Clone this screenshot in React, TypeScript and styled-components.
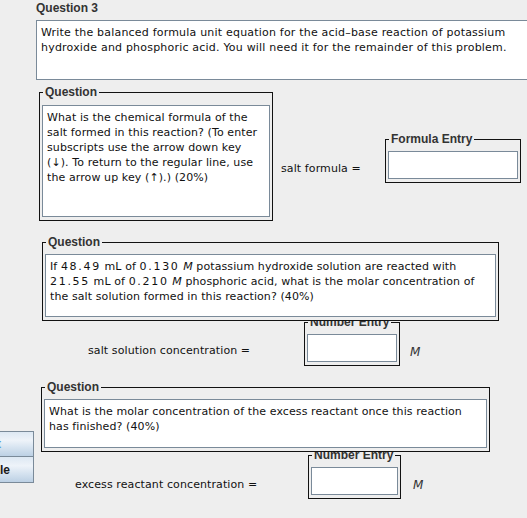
import React from "react";
import styled, { createGlobalStyle } from "styled-components";

const GlobalStyle = createGlobalStyle`
  html, body {
    margin: 0;
    padding: 0;
    background: #eeeeee;
  }
  body {
    font-family: "DejaVu Sans", sans-serif;
  }
`;

const Page = styled.div`
  position: relative;
  width: 527px;
  height: 518px;
  overflow: hidden;
  box-sizing: border-box;
  padding-top: 1px;
  background: #eeeeee;
  color: #111;
  font-family: "DejaVu Sans", sans-serif;
  font-size: 11px;
  letter-spacing: 0.1px;
`;

const Heading = styled.div`
  margin-left: 36px;
  height: 14px;
  line-height: 14px;
  font-family: "Liberation Sans", Arial, sans-serif;
  font-weight: bold;
  font-size: 12px;
  letter-spacing: 0;
  color: #333;
`;

const TextArea = styled.div<{ $h: number; $w?: number }>`
  box-sizing: border-box;
  width: ${(p) => (p.$w ? `${p.$w}px` : "100%")};
  height: ${(p) => p.$h}px;
  padding: 4px 4px;
  background: #fff;
  border: 1px solid #7a8a99;
  line-height: 15px;
  white-space: nowrap;
`;

const Intro = styled(TextArea)`
  margin-top: 5px;
  margin-left: 36px;
  letter-spacing: 0.2px;
`;

const Line = styled.div``;

const Em = styled.i`
  font-style: italic;
`;

const Num = styled.span`
  letter-spacing: 1.7px;
`;

const TitledBox = styled.fieldset<{ $w: number; $left: number; $top: number; $padTop?: number }>`
  position: relative;
  z-index: 1;
  box-sizing: border-box;
  width: ${(p) => p.$w}px;
  min-width: 0;
  margin: ${(p) => p.$top}px 0 0 ${(p) => p.$left}px;
  padding: ${(p) => p.$padTop ?? 5}px 2px 3px 2px;
  border: 1px solid #111;
  background: #eeeeee;
`;

const Title = styled.legend`
  margin-left: 1px;
  padding: 0 2px;
  line-height: 14px;
  height: 14px;
  font-family: "Liberation Sans", Arial, sans-serif;
  font-weight: bold;
  font-size: 12px;
  letter-spacing: 0;
  color: #333;
`;

const EntryBox = styled.fieldset<{ $w: number }>`
  box-sizing: border-box;
  width: ${(p) => p.$w}px;
  min-width: 0;
  margin: 0;
  padding: 5px 2px 3px 2px;
  border: 1px solid #111;
`;

const Field = styled.div`
  box-sizing: border-box;
  height: 28px;
  background: #fff;
  border: 1px solid #7a8a99;
`;

const Row = styled.div<{ $top: number }>`
  display: flex;
  align-items: flex-start;
  margin-top: ${(p) => p.$top}px;
`;

const Label = styled.div<{ $left: number; $w: number; $top: number }>`
  box-sizing: border-box;
  margin: ${(p) => p.$top}px 0 0 ${(p) => p.$left}px;
  width: ${(p) => p.$w}px;
  line-height: 15px;
  white-space: nowrap;
`;

const Slot = styled.div<{ $top?: number }>`
  margin-top: ${(p) => p.$top ?? 0}px;
`;

const Unit = styled.div<{ $left: number; $top: number }>`
  margin: ${(p) => p.$top}px 0 0 ${(p) => p.$left}px;
  line-height: 15px;
  font-style: italic;
  font-size: 12px;
  color: #333;
`;

const SideButtons = styled.div`
  position: absolute;
  left: 0;
  top: 431px;
  width: 34px;
  z-index: 2;
  display: flex;
  flex-direction: column;
`;

const SideButton = styled.div<{ $h: number; $pad: number; $color: string }>`
  box-sizing: border-box;
  height: ${(p) => p.$h}px;
  display: flex;
  align-items: center;
  justify-content: flex-end;
  overflow: hidden;
  white-space: nowrap;
  padding-right: ${(p) => p.$pad}px;
  border: 1px solid #7a8a99;
  border-left: none;
  & + & {
    border-top: none;
  }
  background: linear-gradient(#dde8f3 0%, #eef3f9 35%, #d6e3f0 65%, #bcd0e4 100%);
  font-family: "Liberation Sans", Arial, sans-serif;
  font-weight: bold;
  font-size: 12px;
  letter-spacing: 0;
  color: ${(p) => p.$color};
`;

export default function App() {
  return (
    <Page>
      <GlobalStyle />
      <Heading>Question 3</Heading>
      <Intro $h={60} $w={500}>
        <Line>Write the balanced formula unit equation for the acid–base reaction of potassium</Line>
        <Line>hydroxide and phosphoric acid. You will need it for the remainder of this problem.</Line>
      </Intro>

      <Row $top={5}>
        <TitledBox $w={234} $left={39} $top={0} $padTop={6}>
          <Title>Question</Title>
          <TextArea $h={112}>
            <Line>What is the chemical formula of the</Line>
            <Line>salt formed in this reaction? (To enter</Line>
            <Line>subscripts use the arrow down key</Line>
            <Line>(↓). To return to the regular line, use</Line>
            <Line>the arrow up key (↑).) (20%)</Line>
          </TextArea>
        </TitledBox>
        <Label $left={8} $w={104} $top={76}>salt formula =</Label>
        <Slot $top={47}>
          <EntryBox $w={136}>
            <Title>Formula Entry</Title>
            <Field />
          </EntryBox>
        </Slot>
      </Row>

      <TitledBox $w={457} $left={42} $top={14}>
        <Title>Question</Title>
        <TextArea $h={63}>
          <Line>If <Num>48.49</Num> mL of <Num>0.130</Num> <Em>M</Em> potassium hydroxide solution are reacted with</Line>
          <Line><Num>21.55</Num> mL of <Num>0.210</Num> <Em>M</Em> phosphoric acid, what is the molar concentration of</Line>
          <Line>the salt solution formed in this reaction? (40%)</Line>
        </TextArea>
      </TitledBox>

      <Row $top={-6}>
        <Label $left={88} $w={216} $top={28}>salt solution concentration =</Label>
        <EntryBox $w={96}>
          <Title>Number Entry</Title>
          <Field />
        </EntryBox>
        <Unit $left={10} $top={30}>M</Unit>
      </Row>

      <TitledBox $w={449} $left={41} $top={14}>
        <Title>Question</Title>
        <TextArea $h={49}>
          <Line>What is the molar concentration of the excess reactant once this reaction</Line>
          <Line>has finished? (40%)</Line>
        </TextArea>
      </TitledBox>

      <Row $top={-4}>
        <Label $left={75} $w={233} $top={29}>excess reactant concentration =</Label>
        <EntryBox $w={93}>
          <Title>Number Entry</Title>
          <Field />
        </EntryBox>
        <Unit $left={12} $top={30}>M</Unit>
      </Row>

      <SideButtons>
        <SideButton $h={26} $pad={32} $color="#5a9fe0">Hint</SideButton>
        <SideButton $h={26} $pad={23} $color="#1a1a1a">Periodic Table</SideButton>
      </SideButtons>
    </Page>
  );
}
